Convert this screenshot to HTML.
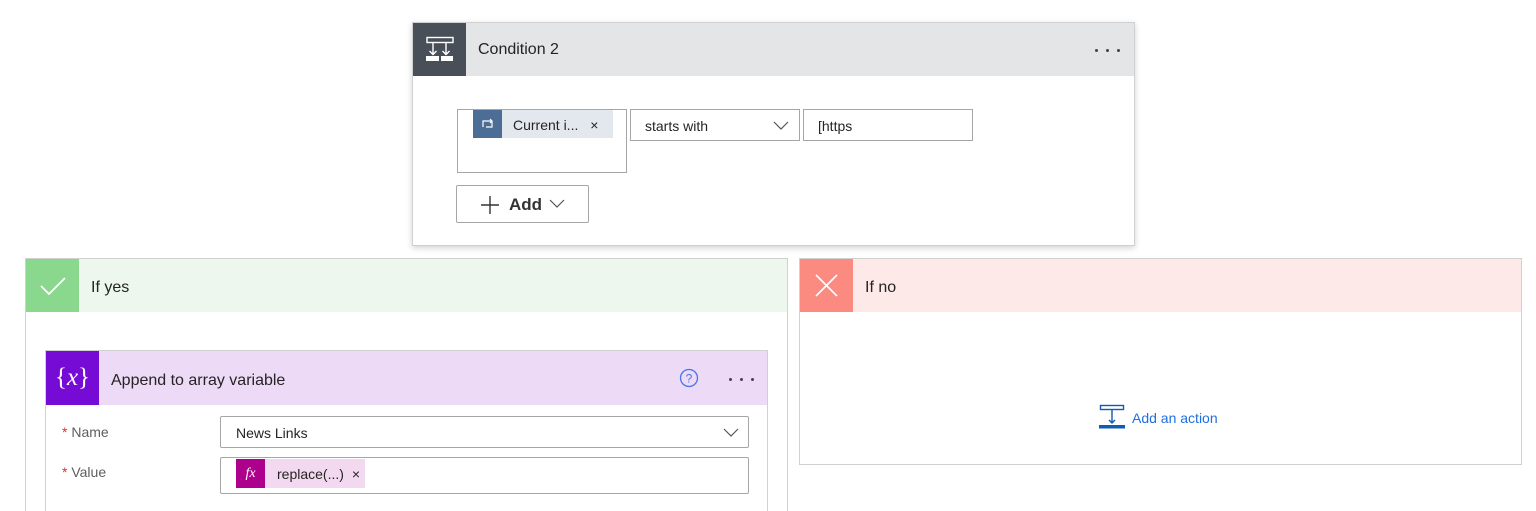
<!DOCTYPE html>
<html><head><meta charset="utf-8"><style>
*{box-sizing:border-box;margin:0;padding:0}
html,body{width:1536px;height:511px;overflow:hidden}
body{background:#fff;position:relative;font-family:"Segoe UI","Liberation Sans",sans-serif;color:#252423}
.a{position:absolute}
.t{font-size:16px}
.dots{position:absolute;display:flex;gap:8px}
.dots i{width:3px;height:3px;border-radius:50%;background:#444;display:block}
</style></head><body>

<!-- Condition card -->
<div class="a" style="left:412px;top:22px;width:723px;height:224px;border:1px solid #d0d0d0;background:#fff;box-shadow:0 2px 6px rgba(0,0,0,.18)"></div>
<div class="a" style="left:413px;top:23px;width:721px;height:53px;background:#e4e5e7"></div>
<div class="a" style="left:413px;top:23px;width:53px;height:53px;background:#484f58">
<svg width="53" height="53" viewBox="0 0 53 53"><g fill="none" stroke="#fff" stroke-width="1.4"><rect x="14" y="14.5" width="26" height="5"/><path d="M20 19.5v12M16.5 28l3.5 3.5 3.5-3.5M33 19.5v12M29.5 28l3.5 3.5 3.5-3.5"/></g><rect x="13" y="33" width="13" height="5" fill="#fff"/><rect x="28" y="33" width="12" height="5" fill="#fff"/></svg>
</div>
<div class="a t" style="left:478px;top:41px">Condition 2</div>
<div class="dots" style="left:1095px;top:49px"><i></i><i></i><i></i></div>

<div class="a" style="left:457px;top:109px;width:170px;height:64px;border:1px solid #a6a6a6"></div>
<div class="a" style="left:473px;top:110px;width:29px;height:28px;background:#4b6d96">
<svg width="29" height="28" viewBox="0 0 29 28"><g fill="none" stroke="#fff" stroke-width="1.2"><path d="M10 17v-6h9M17 9l2 2-2 2M19 11v6h-6"/></g></svg></div>
<div class="a" style="left:502px;top:110px;width:111px;height:28px;background:#e3e8ef;font-size:14px;line-height:31px;padding-left:11px">Current i... <span style="margin-left:8px">×</span></div>
<div class="a" style="left:630px;top:109px;width:170px;height:32px;border:1px solid #a6a6a6;font-size:14px;line-height:33px;padding-left:14px">starts with
<svg class="a" style="left:142px;top:11px" width="16" height="10"><path d="M1 1l7 7 7-7" fill="none" stroke="#555" stroke-width="1.2"/></svg></div>
<div class="a" style="left:803px;top:109px;width:170px;height:32px;border:1px solid #a6a6a6;font-size:14px;line-height:33px;padding-left:14px">[https</div>
<div class="a" style="left:456px;top:185px;width:133px;height:38px;border:1px solid #a6a6a6;border-radius:2px"></div>
<svg class="a" style="left:480px;top:195px" width="20" height="20"><path d="M10 1v18M1 10h18" stroke="#333" stroke-width="1.4"/></svg>
<div class="a" style="left:509px;top:195px;font-size:17px;font-weight:600;color:#333">Add</div>
<svg class="a" style="left:549px;top:199px" width="16" height="10"><path d="M1 1l7 7 7-7" fill="none" stroke="#555" stroke-width="1.2"/></svg>

<!-- If yes -->
<div class="a" style="left:25px;top:258px;width:763px;height:260px;border:1px solid #d0d0d0;background:#fff"></div>
<div class="a" style="left:26px;top:259px;width:761px;height:53px;background:#edf7ee"></div>
<div class="a" style="left:26px;top:259px;width:53px;height:53px;background:#8ad88e">
<svg width="53" height="53"><path d="M15 27l8 8 16-16" fill="none" stroke="#fff" stroke-width="1.8"/></svg></div>
<div class="a t" style="left:91px;top:279px">If yes</div>

<!-- Append card -->
<div class="a" style="left:45px;top:350px;width:723px;height:170px;border:1px solid #d0d0d0;background:#fff"></div>
<div class="a" style="left:46px;top:351px;width:721px;height:54px;background:#ecdaf6"></div>
<div class="a" style="left:46px;top:351px;width:53px;height:54px;background:#770bd6;color:#fff;font-family:'Liberation Serif',serif;font-size:25px;line-height:54px;text-align:center">{<i>x</i>}</div>
<div class="a t" style="left:111px;top:372px">Append to array variable</div>
<svg class="a" style="left:679px;top:368px" width="20" height="20"><circle cx="10" cy="10" r="8.5" fill="none" stroke="#4a74e8" stroke-width="1.3"/><text x="10" y="14.5" text-anchor="middle" font-size="12" fill="#4a74e8" font-family="Liberation Sans">?</text></svg>
<div class="dots" style="left:729px;top:378px"><i></i><i></i><i></i></div>
<div class="a" style="left:62px;top:424px;font-size:14px;color:#605e5c"><span style="color:#d13438">*</span> Name</div>
<div class="a" style="left:62px;top:464px;font-size:14px;color:#605e5c"><span style="color:#d13438">*</span> Value</div>
<div class="a" style="left:220px;top:416px;width:529px;height:32px;border:1px solid #a6a6a6;border-radius:2px;font-size:14px;line-height:33px;padding-left:15px">News Links
<svg class="a" style="left:502px;top:11px" width="16" height="10"><path d="M1 1l7 7 7-7" fill="none" stroke="#555" stroke-width="1.2"/></svg></div>
<div class="a" style="left:220px;top:457px;width:529px;height:37px;border:1px solid #a6a6a6;border-radius:2px"></div>
<div class="a" style="left:236px;top:459px;width:29px;height:29px;background:#ad008c;color:#fff;font-family:'Liberation Serif',serif;font-style:italic;font-size:14px;line-height:29px;text-align:center">fx</div>
<div class="a" style="left:265px;top:459px;width:100px;height:29px;background:#f2d9ef;font-size:14px;line-height:31px;padding-left:12px">replace(...) <span style="margin-left:4px">×</span></div>

<!-- If no -->
<div class="a" style="left:799px;top:258px;width:723px;height:207px;border:1px solid #d0d0d0;background:#fff"></div>
<div class="a" style="left:800px;top:259px;width:721px;height:53px;background:#fee9e9"></div>
<div class="a" style="left:800px;top:259px;width:53px;height:53px;background:#fb8a80">
<svg width="53" height="53"><path d="M16 16l21 21M37 16l-21 21" stroke="#fff" stroke-width="1.6"/></svg></div>
<div class="a t" style="left:865px;top:279px">If no</div>
<svg class="a" style="left:1099px;top:404px" width="26" height="26"><g fill="none" stroke="#0f5bb5" stroke-width="1.4"><rect x="1.5" y="1.5" width="23" height="4"/><path d="M13 6v13M10 16l3 3 3-3"/></g><rect x="0" y="21" width="26" height="3.5" fill="#0f5bb5"/></svg>
<div class="a" style="left:1132px;top:410px;font-size:14px;color:#1f6fe0">Add an action</div>
</body></html>
